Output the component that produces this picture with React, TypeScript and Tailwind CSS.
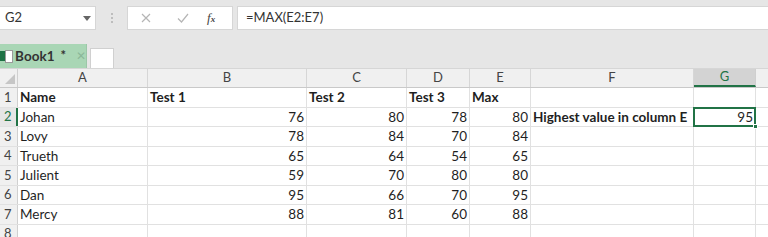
import React from "react";

const cols = [
  { k: "A", w: 130 },
  { k: "B", w: 159 },
  { k: "C", w: 100 },
  { k: "D", w: 63 },
  { k: "E", w: 61 },
  { k: "F", w: 163 },
  { k: "G", w: 62 },
  { k: "H", w: 40 },
];

type Cell = { t: string; b?: boolean; r?: boolean };
const rows: Cell[][] = [
  [{ t: "Name", b: true }, { t: "Test 1", b: true }, { t: "Test 2", b: true }, { t: "Test 3", b: true }, { t: "Max", b: true }, { t: "" }, { t: "" }, { t: "" }],
  [{ t: "Johan" }, { t: "76", r: true }, { t: "80", r: true }, { t: "78", r: true }, { t: "80", r: true }, { t: "Highest value in column E", b: true }, { t: "95", r: true }, { t: "" }],
  [{ t: "Lovy" }, { t: "78", r: true }, { t: "84", r: true }, { t: "70", r: true }, { t: "84", r: true }, { t: "" }, { t: "" }, { t: "" }],
  [{ t: "Trueth" }, { t: "65", r: true }, { t: "64", r: true }, { t: "54", r: true }, { t: "65", r: true }, { t: "" }, { t: "" }, { t: "" }],
  [{ t: "Julient" }, { t: "59", r: true }, { t: "70", r: true }, { t: "80", r: true }, { t: "80", r: true }, { t: "" }, { t: "" }, { t: "" }],
  [{ t: "Dan" }, { t: "95", r: true }, { t: "66", r: true }, { t: "70", r: true }, { t: "95", r: true }, { t: "" }, { t: "" }, { t: "" }],
  [{ t: "Mercy" }, { t: "88", r: true }, { t: "81", r: true }, { t: "60", r: true }, { t: "88", r: true }, { t: "" }, { t: "" }, { t: "" }],
  [{ t: "" }, { t: "" }, { t: "" }, { t: "" }, { t: "" }, { t: "" }, { t: "" }, { t: "" }],
];

export default function App() {
  return (
    <div className="w-[768px] h-[237px] overflow-hidden bg-[#e6e6e6] text-[#1f1f1f] [font-family:Lato,'Liberation_Sans',sans-serif]">
      {/* Formula bar */}
      <div className="h-[44px] pt-[6px] flex items-start">
        <div className="w-[96px] h-[24px] bg-white border border-[#d6d6d6] border-l-0 flex items-center justify-between pl-[5px] pr-[4px]">
          <span className="text-[13px] text-[#333]">G2</span>
          <svg width="8" height="5" viewBox="0 0 8 5"><path d="M0 0h8L4 5z" fill="#666" /></svg>
        </div>
        <div className="w-[31px] h-[24px] flex items-center justify-center">
          <div className="flex flex-col gap-[2px]">
            <span className="block w-[2px] h-[2px] bg-[#bdbdbd]" />
            <span className="block w-[2px] h-[2px] bg-[#bdbdbd]" />
            <span className="block w-[2px] h-[2px] bg-[#bdbdbd]" />
          </div>
        </div>
        <div className="w-[106px] h-[24px] bg-white border border-[#d6d6d6] flex items-center">
          <svg className="ml-[13px]" width="10" height="10" viewBox="0 0 10 10"><path d="M1 1l8 8M9 1l-8 8" stroke="#b5b5b5" strokeWidth="1.2" /></svg>
          <svg className="ml-[26px]" width="12" height="10" viewBox="0 0 12 10"><path d="M1 5.5l3.5 3.5L11 1" stroke="#b5b5b5" strokeWidth="1.2" fill="none" /></svg>
          <span className="ml-[18px] text-[13px] italic text-[#444] [font-family:'Liberation_Serif',serif]">f<span className="text-[9px] font-bold">x</span></span>
        </div>
        <div className="ml-[4px] flex-1 h-[24px] bg-white border border-[#d6d6d6] border-r-0 flex items-center pl-[8px]">
          <span className="text-[13px] text-[#333]">=MAX(E2:E7)</span>
        </div>
      </div>
      {/* Tab row */}
      <div className="h-[24px] flex items-end">
        <div className="w-[87px] h-[24px] bg-[#a9d6b5] flex items-center border-r border-[#9cc7a8]">
          <div className="w-[17px] h-[14px] flex items-center -ml-[2px]">
            <div className="w-[7px] h-[10px] bg-[#1e7145]" />
            <div className="w-[8px] h-[13px] bg-white border border-[#9a9a9a]" />
          </div>
          <span className="ml-[2px] text-[13.5px] font-bold text-[#333]">Book1</span>
          <span className="ml-[6px] text-[13px] font-bold text-[#333]">*</span>
          <span className="ml-[10px] text-[12px] text-[#8bb899]">✕</span>
        </div>
        <div className="ml-[3px] w-[24px] h-[20px] bg-white border border-[#d0d0d0] border-b-0" />
      </div>
      {/* Grid */}
      <div className="bg-white">
        <div className="flex h-[20px] bg-[#f0f0f0] border-b border-[#c9c9c9] border-t border-t-[#d6d6d6]">
          <div className="w-[18px] shrink-0 border-r border-[#d0d0d0] relative">
            <svg className="absolute right-[2px] bottom-[3px]" width="10" height="10" viewBox="0 0 10 10"><path d="M10 0v10H0z" fill="#c6c6c6" /></svg>
          </div>
          {cols.map((c) => (
            <div
              key={c.k}
              style={{ width: c.w }}
              className={
                c.k === "G"
                  ? "shrink-0 border-r border-[#cfcfcf] bg-[#d3d3d3] border-b-2 border-b-[#217346] text-[#217346] text-[13px] flex items-center justify-center"
                  : "shrink-0 border-r border-[#d6d6d6] text-[13px] text-[#444] flex items-center justify-center"
              }
            >
              {c.k}
            </div>
          ))}
        </div>
        {rows.map((row, i) => (
          <div key={i} className="flex h-[19.5px] border-b border-[#e1e1e1]">
            <div
              className={
                i === 1
                  ? "w-[18px] shrink-0 bg-[#e6e6e6] border-r-2 border-[#217346] text-[13px] text-[#217346] flex items-center pl-[4px]"
                  : "w-[18px] shrink-0 bg-[#f0f0f0] border-r border-[#d0d0d0] text-[13px] text-[#444] flex items-center pl-[4px]"
              }
            >
              {i + 1}
            </div>
            {row.map((cell, j) => {
              const selected = i === 1 && j === 6;
              return (
                <div
                  key={j}
                  style={{ width: cols[j].w }}
                  className={
                    "shrink-0 relative flex items-center text-[13.5px] whitespace-nowrap overflow-visible " +
                    (cell.r ? "justify-end pr-[2px] " : "pl-[2px] ") +
                    (cell.b ? "font-bold " : "") +
                    (i === 1 && j === 5 ? "" : "border-r border-[#e1e1e1] ")
                  }
                >
                  <span className="relative z-10">{cell.t}</span>
                  {selected && (
                    <>
                      <div className="absolute -left-[1px] -top-[1px] -right-[1px] -bottom-[1px] border-2 border-[#217346] pointer-events-none" />
                      <div className="absolute -right-[3px] -bottom-[3px] w-[5px] h-[5px] bg-[#217346] border border-white z-20" />
                    </>
                  )}
                </div>
              );
            })}
          </div>
        ))}
      </div>
    </div>
  );
}
